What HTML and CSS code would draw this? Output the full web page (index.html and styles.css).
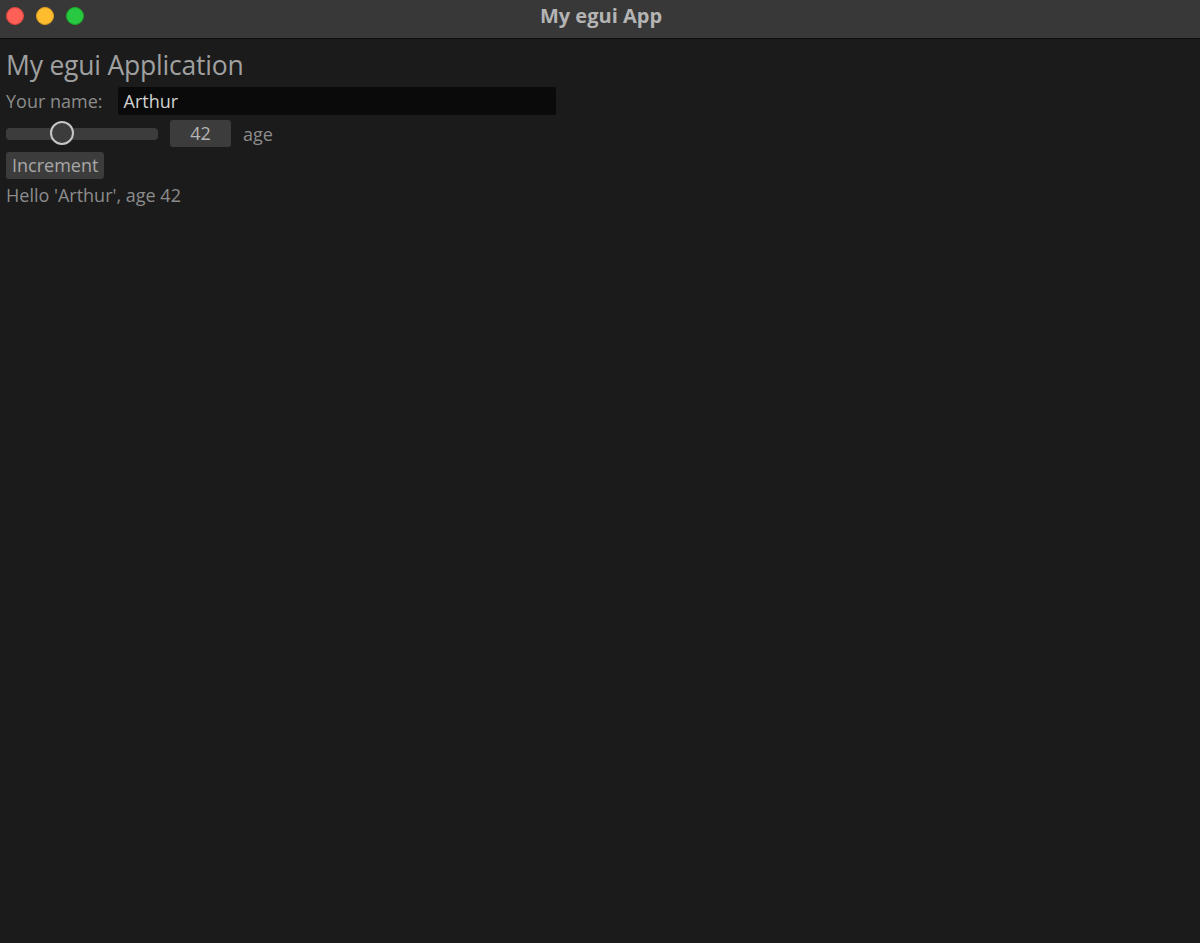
FILE: index.html
```html
<!DOCTYPE html>
<html>
<head>
<meta charset="utf-8">
<link rel="stylesheet" href="styles.css">
</head>
<body>
<div class="window">
  <div class="titlebar">
    <div class="lights">
      <span class="light red"></span>
      <span class="light yellow"></span>
      <span class="light green"></span>
    </div>
    <div class="title">My egui App</div>
  </div>
  <div class="content">
    <div class="heading">My egui Application</div>
    <div class="row name-row">
      <span class="label">Your name:</span>
      <div class="textedit">Arthur</div>
    </div>
    <div class="row slider-row">
      <div class="slider">
        <div class="track"></div>
        <div class="knob"></div>
      </div>
      <div class="dragvalue">42</div>
      <span class="label">age</span>
    </div>
    <div class="row">
      <div class="button">Increment</div>
    </div>
    <div class="row">
      <span class="label">Hello 'Arthur', age 42</span>
    </div>
  </div>
</div>
</body>
</html>
```
FILE: styles.css
```css
html, body {
  margin: 0;
  padding: 0;
  background: #1b1b1b;
}
.window {
  width: 1200px;
  height: 943px;
  background: #1b1b1b;
  font-family: "Open Sans", "Noto Sans", sans-serif;
  color: #8c8c8c;
}
.titlebar {
  position: relative;
  height: 38px;
  background: #383838;
  border-bottom: 1px solid #0e0e0e;
  display: flex;
  align-items: center;
  justify-content: center;
}
.lights {
  position: absolute;
  left: 6px;
  top: 7px;
  display: flex;
  gap: 12px;
}
.light {
  width: 18px;
  height: 18px;
  border-radius: 50%;
  box-sizing: border-box;
}
.red { background: #fe5f57; border: 0.5px solid #e0443e; }
.yellow { background: #febc2e; border: 0.5px solid #dea123; }
.green { background: #28c840; border: 0.5px solid #1aab29; }
.title {
  font-family: "Open Sans", sans-serif;
  font-weight: 700;
  font-size: 20px;
  color: #b4b4b4;
  margin-top: -7px;
  margin-left: 2px;
}
.content {
  padding: 8px 6px;
  display: flex;
  flex-direction: column;
}
.heading {
  font-size: 26.5px;
  line-height: 36px;
  color: #a0a0a0;
  letter-spacing: -0.2px;
}
.row {
  display: flex;
  align-items: center;
}
.label {
  font-size: 18px;
  color: #8c8c8c;
}
.name-row {
  height: 28px;
  gap: 15px;
  margin-top: 4px;
}
.textedit {
  width: 432px;
  height: 28px;
  line-height: 28px;
  background: #0a0a0a;
  border-radius: 2px;
  padding-left: 6px;
  font-size: 18px;
  color: #d2d2d2;
}
.slider-row {
  margin-top: 5px;
  height: 27px;
}
.slider {
  position: relative;
  width: 152px;
  height: 27px;
  display: flex;
  align-items: center;
}
.track {
  width: 152px;
  height: 12px;
  background: #3c3c3c;
  border-radius: 4px;
}
.knob {
  position: absolute;
  left: 44px;
  top: 1px;
  width: 24px;
  height: 24px;
  box-sizing: border-box;
  border-radius: 50%;
  background: #3c3c3c;
  border: 2px solid #c6c6c6;
}
.dragvalue {
  margin-left: 12px;
  width: 61px;
  height: 27px;
  line-height: 27px;
  text-align: center;
  background: #3c3c3c;
  border-radius: 3px;
  font-size: 18px;
  color: #b4b4b4;
}
.slider-row .label {
  margin-left: 12px;
}
.row .button {
  margin-top: 5px;
  height: 27px;
  line-height: 27px;
  padding: 0 6px;
  background: #3c3c3c;
  border-radius: 3px;
  font-size: 18px;
  color: #a8a8a8;
}
.content > .row:last-child {
  margin-top: 4px;
}
```
